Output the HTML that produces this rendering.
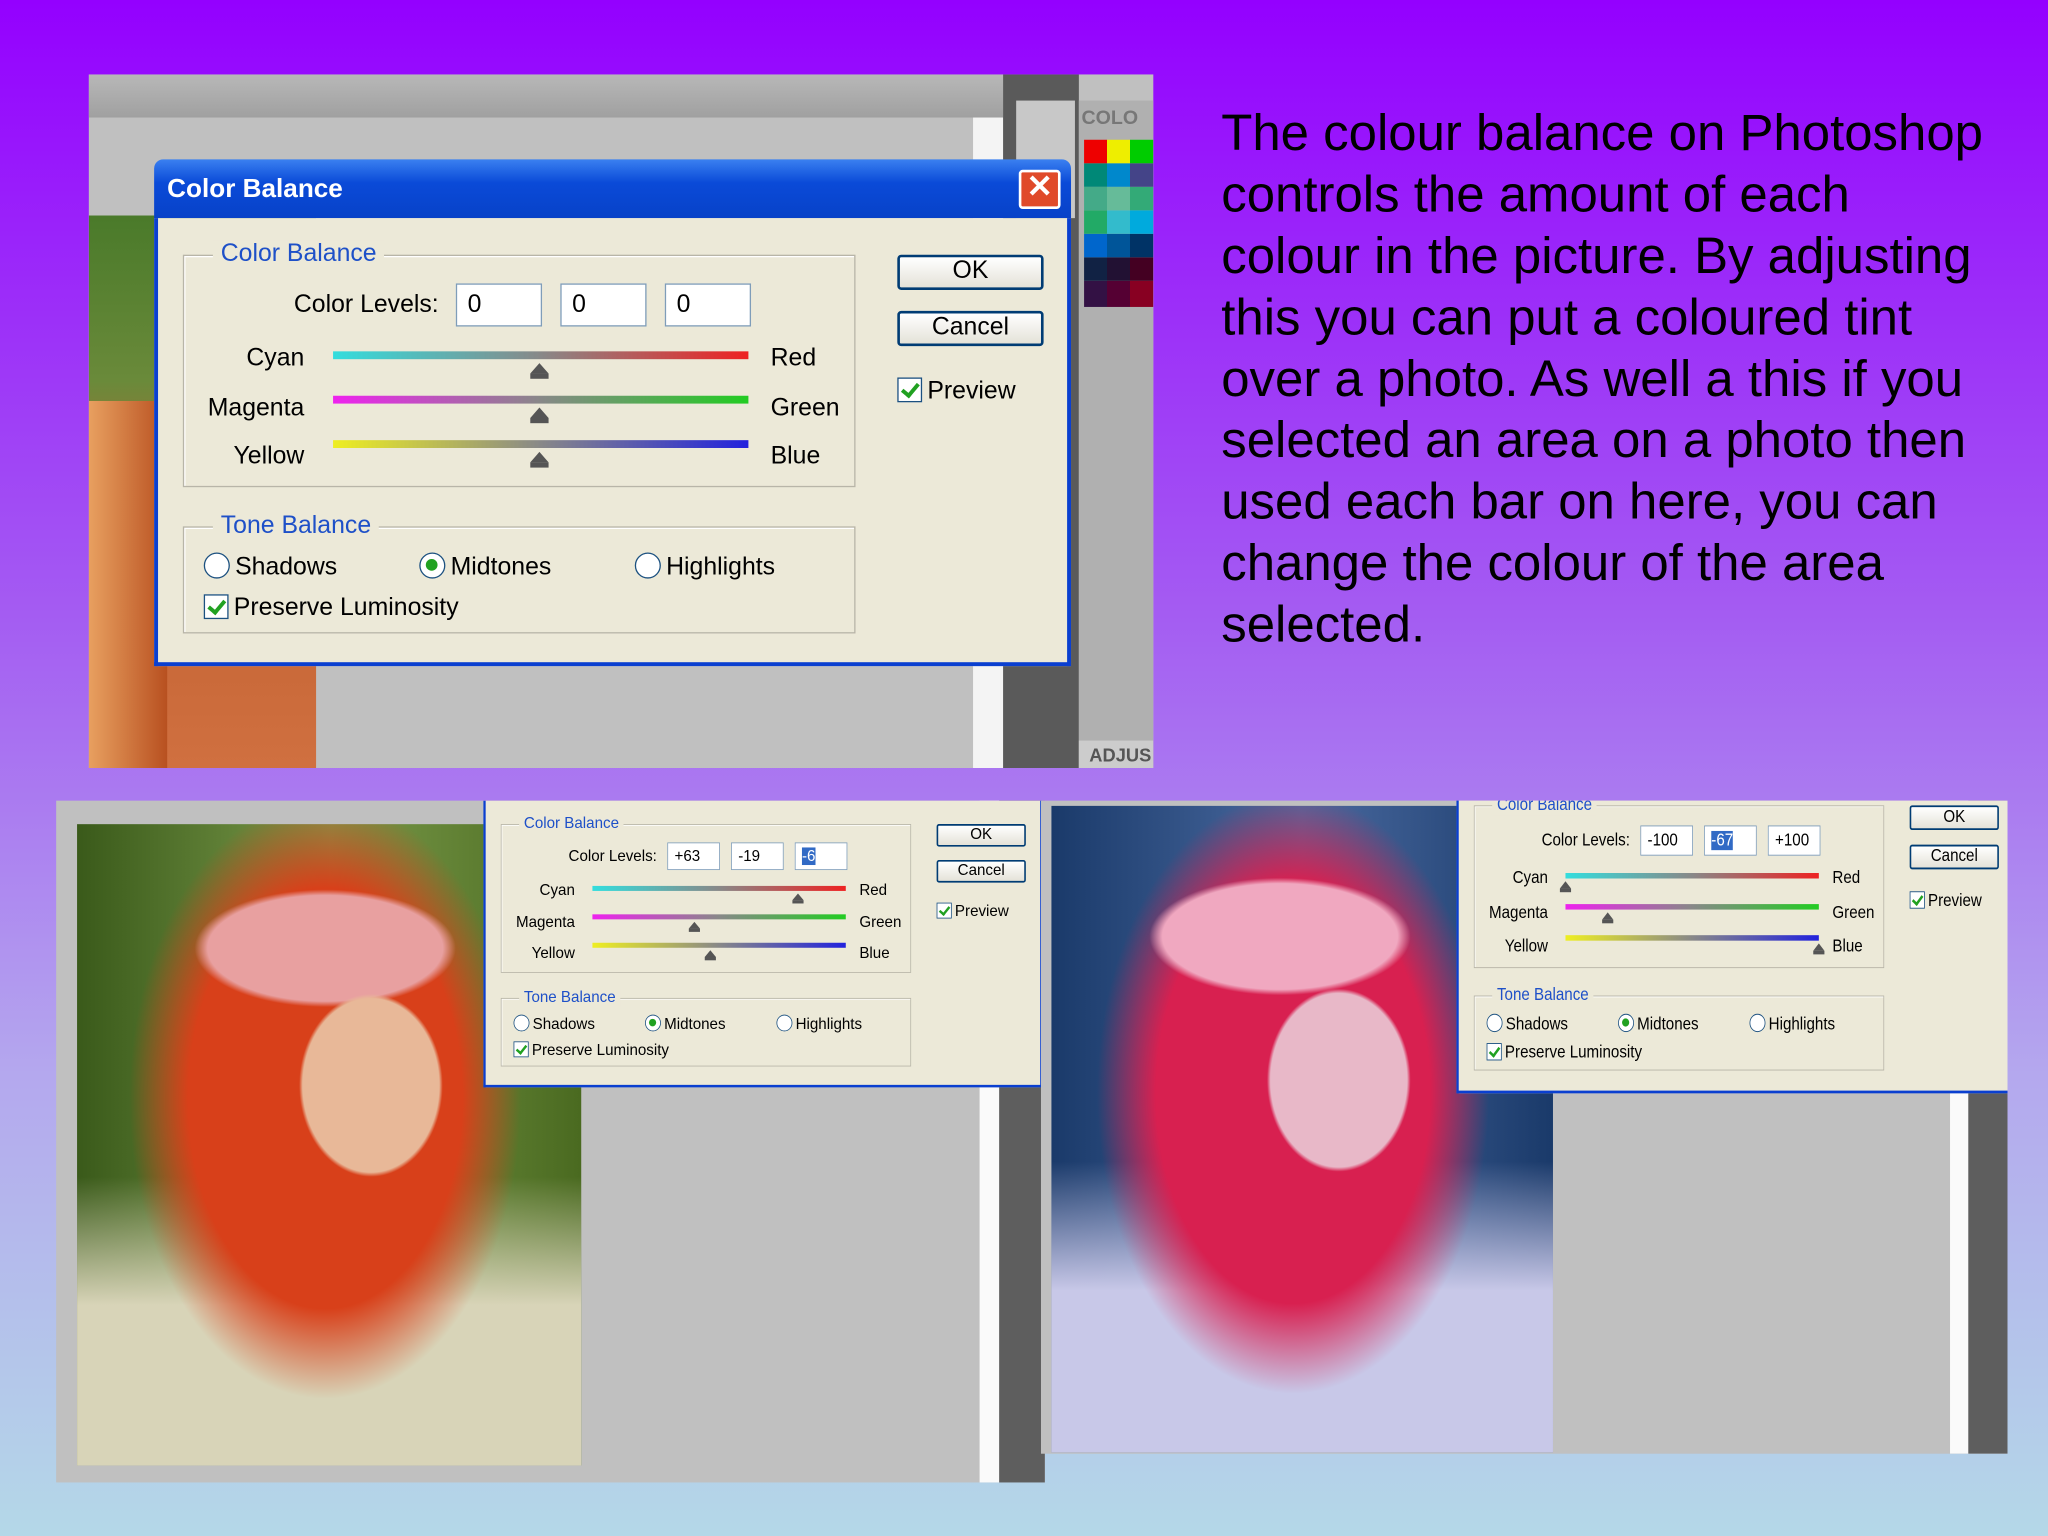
<!DOCTYPE html>
<html><head><meta charset="utf-8"><style>
*{margin:0;padding:0;box-sizing:border-box}
html,body{width:2048px;height:1536px;overflow:hidden}
body{background:linear-gradient(180deg,#9400ff 0%,#a45cf2 40%,#b4a8ee 70%,#b4d8e8 100%);font-family:"Liberation Sans",sans-serif}
#s{position:absolute;left:0;top:0;width:1568px;height:1176px;transform:scale(1.306122);transform-origin:0 0}
.a{position:absolute}
.txt{left:935px;top:79px;width:588px;font-size:39px;line-height:47px;color:#000}
.body{position:absolute;width:702px;height:343px;background:#ece9d8;border:3px solid #0a3fd0;border-top:none;font-size:19px;color:#000;transform-origin:0 0}
.fs{position:absolute;border:1px solid #b8b5a8;box-shadow:1px 1px 0 #fff inset}
.lg{position:absolute;background:#ece9d8;color:#1e50c8;padding:0 6px;font-size:19px}
.in{position:absolute;background:#fff;border:1px solid #7f9db9;height:33px;font-size:19px;padding:5px 8px}
.tr{position:absolute;left:134px;width:318px;height:6px}
.th{position:absolute;width:0;height:0;border-left:7px solid transparent;border-right:7px solid transparent;border-bottom:8px solid #555}
.th:after{content:"";position:absolute;left:-7px;top:8px;width:14px;height:4px;background:#555}
.btn{position:absolute;left:566px;width:112px;height:27px;border:2px solid #003c74;border-radius:3px;background:linear-gradient(#fff,#e4e2d8);text-align:center;font-size:19px;line-height:22px}
.rd{display:inline-block;width:20px;height:20px;border:1.5px solid #1c5180;border-radius:50%;background:#fff;vertical-align:-3px;margin-right:4px;position:relative}
.rd.on:after{content:"";position:absolute;left:4px;top:4px;width:9px;height:9px;border-radius:50%;background:#21a121}
.cb{display:inline-block;width:19px;height:19px;border:1.5px solid #1c5180;background:#fff;vertical-align:-3px;margin-right:4px;position:relative}
.cb:after{content:"";position:absolute;left:5px;top:1px;width:5px;height:10px;border:solid #21a121;border-width:0 3px 3px 0;transform:rotate(40deg)}
.r{text-align:right;position:absolute;width:100px}
</style></head><body><div id="s">

<div class="a" style="left:68px;top:57px;width:815px;height:531px;background:#c0c0c0;overflow:hidden">
 <div class="a" style="left:0;top:0;width:700px;height:33px;background:linear-gradient(#b8b8b8,#a0a0a0)"></div>
 <div class="a" style="left:0;top:108px;width:174px;height:423px;background:linear-gradient(180deg,#4a7a2a 0%,#6a8a3a 30%,#c06030 55%,#d07040 100%)"></div>
 <div class="a" style="left:0;top:250px;width:60px;height:281px;background:linear-gradient(90deg,#e8a060,#b85020)"></div>
 <div class="a" style="left:677px;top:33px;width:23px;height:498px;background:#f4f4f4"></div>
 <div class="a" style="left:700px;top:0;width:58px;height:531px;background:#5a5a5a"></div>
 <div class="a" style="left:710px;top:20px;width:45px;height:90px;background:#c8c8c8"></div>
 <div class="a" style="left:758px;top:20px;width:57px;height:511px;background:#b0b0b0"></div>
 <div class="a" style="left:760px;top:25px;font-size:15px;font-weight:bold;color:#777">COLO</div>
 <div class="a" style="left:762px;top:50px;width:53px;height:128px;background:
 linear-gradient(90deg,#e00 0 33%,#ee0 33% 66%,#0c0 66%) 0 0/100% 18px no-repeat,
 linear-gradient(90deg,#087 0 33%,#08c 33% 66%,#448 66%) 0 18px/100% 18px no-repeat,
 linear-gradient(90deg,#4a8 0 33%,#6b9 33% 66%,#3a7 66%) 0 36px/100% 18px no-repeat,
 linear-gradient(90deg,#2a6 0 33%,#3bc 33% 66%,#0ad 66%) 0 54px/100% 18px no-repeat,
 linear-gradient(90deg,#06c 0 33%,#059 33% 66%,#036 66%) 0 72px/100% 18px no-repeat,
 linear-gradient(90deg,#124 0 33%,#213 33% 66%,#402 66%) 0 90px/100% 18px no-repeat,
 linear-gradient(90deg,#314 0 33%,#503 33% 66%,#802 66%) 0 108px/100% 20px no-repeat"></div>
 <div class="a" style="left:758px;top:510px;width:57px;height:21px;background:#ccc;font-size:14px;font-weight:bold;color:#555;padding:3px 8px">ADJUS</div>
</div>

<div class="a" style="left:118px;top:122px;width:702px;height:45px;background:linear-gradient(#3a80f0,#0a4ad8 40%,#0842c8);border-radius:7px 7px 0 0;color:#fff;font-weight:bold;font-size:20px;padding:12px 10px">Color Balance
 <div class="a" style="left:662px;top:8px;width:32px;height:30px;background:#e04a2a;border:2px solid #fff;border-radius:3px;color:#fff;text-align:center;font-size:24px;line-height:24px">✕</div>
</div>
<div class="body" style="left:118px;top:167px">
 <div class="fs" style="left:19px;top:28px;width:515px;height:178px"></div>
 <div class="lg" style="left:42px;top:17px">Color Balance</div>
 <div class="a" style="left:104px;top:56px">Color Levels:</div>
 <div class="in" style="left:228px;top:50px;width:66px">0</div>
 <div class="in" style="left:308px;top:50px;width:66px">0</div>
 <div class="in" style="left:388px;top:50px;width:66px">0</div>
 <div class="r" style="left:12px;top:97px">Cyan</div><div class="a" style="left:469px;top:97px">Red</div>
 <div class="r" style="left:12px;top:135px">Magenta</div><div class="a" style="left:469px;top:135px">Green</div>
 <div class="r" style="left:12px;top:172px">Yellow</div><div class="a" style="left:469px;top:172px">Blue</div>
 <div class="tr" style="top:102px;background:linear-gradient(90deg,#3dd,#888,#e22)"></div>
 <div class="tr" style="top:136px;background:linear-gradient(90deg,#e2e,#888,#2c2)"></div>
 <div class="tr" style="top:170px;background:linear-gradient(90deg,#ee2,#888,#22d)"></div>
 <div class="th" style="left:285px;top:111px"></div><div class="th" style="left:285px;top:145px"></div><div class="th" style="left:285px;top:179px"></div>
 <div class="fs" style="left:19px;top:236px;width:515px;height:82px"></div>
 <div class="lg" style="left:42px;top:225px">Tone Balance</div>
 <div class="a" style="left:35px;top:256px"><span class="rd"></span>Shadows</div>
 <div class="a" style="left:200px;top:256px"><span class="rd on"></span>Midtones</div>
 <div class="a" style="left:365px;top:256px"><span class="rd"></span>Highlights</div>
 <div class="a" style="left:35px;top:288px"><span class="cb"></span>Preserve Luminosity</div>
 <div class="btn" style="top:28px">OK</div>
 <div class="btn" style="top:71px">Cancel</div>
 <div class="a" style="left:566px;top:122px"><span class="cb"></span>Preview</div>
</div>

<div class="a txt">The colour balance on Photoshop controls the amount of each colour in the picture. By adjusting this you can put a coloured tint over a photo. As well a this if you selected an area on a photo then used each bar on here, you can change the colour of the area selected.</div>

<div class="a" style="left:43px;top:613px;width:757px;height:522px;background:#c0c0c0;overflow:hidden">
 <div class="a" style="left:707px;top:0;width:15px;height:522px;background:#fafafa"></div>
 <div class="a" style="left:722px;top:0;width:35px;height:522px;background:#5e5e5e"></div>
 <div class="a" style="left:16px;top:18px;width:386px;height:491px;background:
 radial-gradient(ellipse 55px 70px at 225px 200px,#e8b898 0 95%,transparent),
 radial-gradient(ellipse 100px 45px at 190px 95px,#e8a0a0 0 90%,transparent),
 radial-gradient(ellipse 150px 230px at 190px 210px,#d8401a 0 70%,transparent),
 linear-gradient(180deg,transparent 55%,#d8d4b8 75%),
 linear-gradient(90deg,#3a5a1a,#7a9a4a 50%,#4a6a20)"></div>
</div>
<div class="a" style="left:370px;top:613px;width:428px;height:222px;overflow:hidden">
<div class="body" style="left:0;top:0;transform:scale(0.61,0.64)">
 <div class="fs" style="left:19px;top:28px;width:515px;height:178px"></div>
 <div class="lg" style="left:42px;top:17px">Color Balance</div>
 <div class="a" style="left:104px;top:56px">Color Levels:</div>
 <div class="in" style="left:228px;top:50px;width:66px">+63</div>
 <div class="in" style="left:308px;top:50px;width:66px">-19</div>
 <div class="in" style="left:388px;top:50px;width:66px"><span style="background:#316ac5;color:#fff">-6</span></div>
 <div class="r" style="left:12px;top:97px">Cyan</div><div class="a" style="left:469px;top:97px">Red</div>
 <div class="r" style="left:12px;top:135px">Magenta</div><div class="a" style="left:469px;top:135px">Green</div>
 <div class="r" style="left:12px;top:172px">Yellow</div><div class="a" style="left:469px;top:172px">Blue</div>
 <div class="tr" style="top:102px;background:linear-gradient(90deg,#3dd,#888,#e22)"></div>
 <div class="tr" style="top:136px;background:linear-gradient(90deg,#e2e,#888,#2c2)"></div>
 <div class="tr" style="top:170px;background:linear-gradient(90deg,#ee2,#888,#22d)"></div>
 <div class="th" style="left:385px;top:111px"></div><div class="th" style="left:255px;top:145px"></div><div class="th" style="left:275px;top:179px"></div>
 <div class="fs" style="left:19px;top:236px;width:515px;height:82px"></div>
 <div class="lg" style="left:42px;top:225px">Tone Balance</div>
 <div class="a" style="left:35px;top:256px"><span class="rd"></span>Shadows</div>
 <div class="a" style="left:200px;top:256px"><span class="rd on"></span>Midtones</div>
 <div class="a" style="left:365px;top:256px"><span class="rd"></span>Highlights</div>
 <div class="a" style="left:35px;top:288px"><span class="cb"></span>Preserve Luminosity</div>
 <div class="btn" style="top:28px">OK</div>
 <div class="btn" style="top:71px">Cancel</div>
 <div class="a" style="left:566px;top:122px"><span class="cb"></span>Preview</div>
</div></div>

<div class="a" style="left:797px;top:613px;width:740px;height:500px;background:#c0c0c0;overflow:hidden">
 <div class="a" style="left:696px;top:0;width:14px;height:500px;background:#fafafa"></div>
 <div class="a" style="left:710px;top:0;width:30px;height:500px;background:#5e5e5e"></div>
 <div class="a" style="left:8px;top:4px;width:384px;height:495px;background:
 radial-gradient(ellipse 55px 70px at 220px 210px,#e8b8c8 0 95%,transparent),
 radial-gradient(ellipse 100px 45px at 175px 100px,#f0a8c0 0 90%,transparent),
 radial-gradient(ellipse 150px 230px at 185px 220px,#d82050 0 70%,transparent),
 linear-gradient(180deg,transparent 55%,#c8c8e8 75%),
 linear-gradient(90deg,#1a3a6a,#4a6aa0 50%,#1a3a6a)"></div>
</div>
<div class="a" style="left:1115px;top:613px;width:422px;height:228px;overflow:hidden">
<div class="body" style="left:0;top:-16px;transform:scale(0.61,0.70)">
 <div class="fs" style="left:19px;top:28px;width:515px;height:178px"></div>
 <div class="lg" style="left:42px;top:17px">Color Balance</div>
 <div class="a" style="left:104px;top:56px">Color Levels:</div>
 <div class="in" style="left:228px;top:50px;width:66px">-100</div>
 <div class="in" style="left:308px;top:50px;width:66px"><span style="background:#316ac5;color:#fff">-67</span></div>
 <div class="in" style="left:388px;top:50px;width:66px">+100</div>
 <div class="r" style="left:12px;top:97px">Cyan</div><div class="a" style="left:469px;top:97px">Red</div>
 <div class="r" style="left:12px;top:135px">Magenta</div><div class="a" style="left:469px;top:135px">Green</div>
 <div class="r" style="left:12px;top:172px">Yellow</div><div class="a" style="left:469px;top:172px">Blue</div>
 <div class="tr" style="top:102px;background:linear-gradient(90deg,#3dd,#888,#e22)"></div>
 <div class="tr" style="top:136px;background:linear-gradient(90deg,#e2e,#888,#2c2)"></div>
 <div class="tr" style="top:170px;background:linear-gradient(90deg,#ee2,#888,#22d)"></div>
 <div class="th" style="left:127px;top:111px"></div><div class="th" style="left:180px;top:145px"></div><div class="th" style="left:445px;top:179px"></div>
 <div class="fs" style="left:19px;top:236px;width:515px;height:82px"></div>
 <div class="lg" style="left:42px;top:225px">Tone Balance</div>
 <div class="a" style="left:35px;top:256px"><span class="rd"></span>Shadows</div>
 <div class="a" style="left:200px;top:256px"><span class="rd on"></span>Midtones</div>
 <div class="a" style="left:365px;top:256px"><span class="rd"></span>Highlights</div>
 <div class="a" style="left:35px;top:288px"><span class="cb"></span>Preserve Luminosity</div>
 <div class="btn" style="top:28px">OK</div>
 <div class="btn" style="top:71px">Cancel</div>
 <div class="a" style="left:566px;top:122px"><span class="cb"></span>Preview</div>
</div></div>

</div></body></html>
